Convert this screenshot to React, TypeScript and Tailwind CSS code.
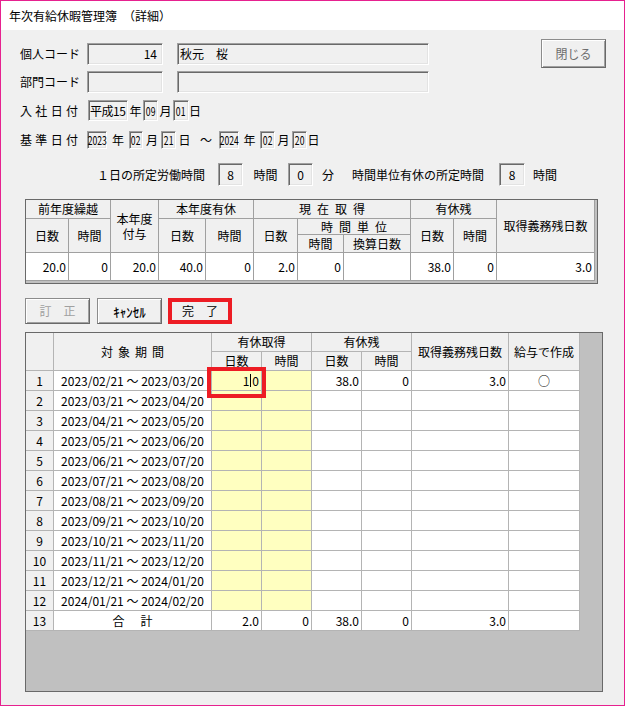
import React from 'react';

const sunken =
  'box-border flex items-center bg-[#f0f0f0] border border-t-[#a0a0a0] border-l-[#a0a0a0] border-r-white border-b-white shadow-[inset_1px_1px_0_#696969,inset_-1px_-1px_0_#e3e3e3]';

const raised =
  'box-border flex items-center justify-center bg-[#f0f0f0] border border-t-[#8c8c8c] border-l-[#8c8c8c] border-r-[#696969] border-b-[#696969] shadow-[inset_1px_1px_0_#ffffff,inset_-1px_-1px_0_#a0a0a0]';

const periods: [string, string][] = [
  ['2023/02/21', '2023/03/20'],
  ['2023/03/21', '2023/04/20'],
  ['2023/04/21', '2023/05/20'],
  ['2023/05/21', '2023/06/20'],
  ['2023/06/21', '2023/07/20'],
  ['2023/07/21', '2023/08/20'],
  ['2023/08/21', '2023/09/20'],
  ['2023/09/21', '2023/10/20'],
  ['2023/10/21', '2023/11/20'],
  ['2023/11/21', '2023/12/20'],
  ['2023/12/21', '2024/01/20'],
  ['2024/01/21', '2024/02/20'],
];

const Spaced: React.FC<{ text: string; className?: string }> = ({ text, className = '' }) => (
  <span className={`flex justify-between ${className}`}>
    {text.split('').map((c, i) => (
      <span key={i}>{c}</span>
    ))}
  </span>
);

// narrow digits inside the small date boxes
const Narrow: React.FC<{ children: React.ReactNode }> = ({ children }) => (
  <span className="inline-block whitespace-nowrap scale-x-[0.72]">{children}</span>
);

const H: React.FC<{ className?: string; children?: React.ReactNode }> = ({ className = '', children }) => (
  <div className={`bg-[#f0f0f0] flex items-center justify-center ${className}`}>{children}</div>
);

const D: React.FC<{ className?: string; children?: React.ReactNode }> = ({ className = 'bg-white', children }) => (
  <div className={`flex items-center justify-end pr-[2px] ${className}`}>{children}</div>
);

const App: React.FC = () => {
  return (
    <div className="w-[625px] h-[706px] box-border border border-[#e6218f] bg-[#f0f0f0] flex flex-col overflow-hidden text-[12px] leading-none text-black font-['Noto_Sans_CJK_JP',sans-serif]">
      {/* TITLE */}
      <div className="h-[29px] shrink-0 bg-white flex items-center pl-[8px]">年次有給休暇管理簿　（詳細）</div>

      {/* 個人コード / 部門コード */}
      <div className="flex pl-[19px] pr-[18px] pt-[9px]">
        <div className="flex flex-col gap-[6px] pt-[4px]">
          <div className="flex items-center h-[22px]">
            <span className="w-[67px]">個人コード</span>
            <div className={`${sunken} w-[76px] h-[22px] justify-end pr-[5px]`}>14</div>
            <div className={`${sunken} w-[252px] h-[22px] ml-[14px] pl-[2px]`}>秋元　桜</div>
          </div>
          <div className="flex items-center h-[22px]">
            <span className="w-[67px]">部門コード</span>
            <div className={`${sunken} w-[76px] h-[22px]`} />
            <div className={`${sunken} w-[252px] h-[22px] ml-[14px]`} />
          </div>
        </div>
        <button className={`${raised} ml-auto w-[65px] h-[29px] text-[#6d6d6d]`}>閉じる</button>
      </div>

      {/* 入社日付 */}
      <div className="flex items-center h-[21px] mt-[7px] pl-[19px]">
        <span className="w-[68px]">
          <Spaced text="入社日付" className="w-[58px]" />
        </span>
        <div className={`${sunken} w-[40px] h-[21px] pl-[1px] whitespace-nowrap tracking-[-0.5px]`}>平成15</div>
        <span className="w-[15px] text-center">年</span>
        <div className={`${sunken} w-[15px] h-[21px] justify-center`}>
          <Narrow>09</Narrow>
        </div>
        <span className="w-[15px] text-center">月</span>
        <div className={`${sunken} w-[16px] h-[21px] justify-center`}>
          <Narrow>01</Narrow>
        </div>
        <span className="w-[12px] text-center">日</span>
      </div>

      {/* 基準日付 */}
      <div className="flex items-center h-[18px] mt-[10px] pl-[19px]">
        <span className="w-[67px]">
          <Spaced text="基準日付" className="w-[58px]" />
        </span>
        <div className={`${sunken} w-[20px] h-[18px] justify-center`}>
          <Narrow>2023</Narrow>
        </div>
        <span className="w-[22px] text-center">年</span>
        <div className={`${sunken} w-[14px] h-[18px] justify-center`}>
          <Narrow>02</Narrow>
        </div>
        <span className="w-[18px] text-center">月</span>
        <div className={`${sunken} w-[15px] h-[18px] justify-center`}>
          <Narrow>21</Narrow>
        </div>
        <span className="w-[17px] text-center">日</span>
        <span className="w-[26px] text-center">～</span>
        <div className={`${sunken} w-[20px] h-[18px] justify-center`}>
          <Narrow>2024</Narrow>
        </div>
        <span className="w-[21px] text-center">年</span>
        <div className={`${sunken} w-[15px] h-[18px] justify-center`}>
          <Narrow>02</Narrow>
        </div>
        <span className="w-[17px] text-center">月</span>
        <div className={`${sunken} w-[15px] h-[18px] justify-center`}>
          <Narrow>20</Narrow>
        </div>
        <span className="w-[13px] text-center">日</span>
      </div>

      {/* 所定労働時間 */}
      <div className="flex items-center h-[23px] mt-[14px] pl-[96px]">
        <span className="w-[121px]">１日の所定労働時間</span>
        <div className={`${sunken} w-[25px] h-[23px] justify-center`}>8</div>
        <span className="w-[45px] text-center">時間</span>
        <div className={`${sunken} w-[25px] h-[23px] justify-center`}>0</div>
        <span className="ml-[9px] w-[30px]">分</span>
        <span className="w-[147px]">時間単位有休の所定時間</span>
        <div className={`${sunken} w-[26px] h-[23px] justify-center`}>8</div>
        <span className="ml-[8px]">時間</span>
      </div>

      {/* SUMMARY TABLE */}
      <div className="ml-[24px] mt-[13px] w-[573px] h-[85px] shrink-0 box-border border border-[#696969] bg-[#c0c0c0]">
        <div className="grid w-fit grid-cols-[42px_41px_47px_46px_47px_43px_45px_66px_42px_42px_97px] grid-rows-[18px_15px_17px_27px] gap-px bg-[#a0a0a0] pr-px pb-px">
          <H className="col-span-2">前年度繰越</H>
          <H className="row-span-3 flex-col gap-[3px]">
            <span>本年度</span>
            <span>付与</span>
          </H>
          <H className="col-span-2">本年度有休</H>
          <H className="col-span-3">
            <Spaced text="現在取得" className="w-[66px]" />
          </H>
          <H className="col-span-2">有休残</H>
          <H className="row-span-3">取得義務残日数</H>

          <H className="row-span-2">日数</H>
          <H className="row-span-2">時間</H>
          <H className="row-span-2">日数</H>
          <H className="row-span-2">時間</H>
          <H className="row-span-2">日数</H>
          <H className="col-span-2">
            <Spaced text="時間単位" className="w-[66px]" />
          </H>
          <H className="row-span-2">日数</H>
          <H className="row-span-2">時間</H>

          <H>時間</H>
          <H>換算日数</H>

          <D>20.0</D>
          <D>0</D>
          <D>20.0</D>
          <D>40.0</D>
          <D>0</D>
          <D>2.0</D>
          <D>0</D>
          <D />
          <D>38.0</D>
          <D>0</D>
          <D>3.0</D>
        </div>
      </div>

      {/* BUTTONS */}
      <div className="flex items-center mt-[14px] ml-[24px] h-[26px]">
        <button className={`${raised} w-[65px] h-[26px] text-[#a0a0a0]`}>訂　正</button>
        <button className={`${raised} w-[65px] h-[26px] ml-[7px] text-[13px] font-medium`}>ｷｬﾝｾﾙ</button>
        <div className="box-border flex items-center justify-center w-[64px] h-[26px] ml-[6px] border-[4px] border-[#ed1c24]">完　了</div>
      </div>

      {/* DETAIL TABLE */}
      <div className="relative ml-[24px] mt-[8px] w-[578px] h-[360px] shrink-0 box-border border border-[#696969] bg-[#c0c0c0]">
        <div className="grid w-fit grid-cols-[27px_157px_49px_49px_49px_49px_96px_70px] grid-rows-[18px_18px_repeat(13,19px)] gap-px bg-[#b4b4b4] pr-px pb-px">
          <H className="row-span-2" />
          <H className="row-span-2">
            <Spaced text="対象期間" className="w-[63px]" />
          </H>
          <H className="col-span-2">有休取得</H>
          <H className="col-span-2">有休残</H>
          <H className="row-span-2">取得義務残日数</H>
          <H className="row-span-2">給与で作成</H>
          <H>日数</H>
          <H>時間</H>
          <H>日数</H>
          <H>時間</H>

          {periods.map(([from, to], i) => (
            <React.Fragment key={from}>
              <H>{i + 1}</H>
              <div className="bg-white flex items-center justify-center">
                {from} ～ {to}
              </div>
              {i === 0 ? (
                <D className="bg-[#ffffc0]">
                  1<span className="inline-block w-px h-[13px] bg-black mx-[1px]" />0
                </D>
              ) : (
                <D className="bg-[#ffffc0]" />
              )}
              <D className="bg-[#ffffc0]" />
              <D>{i === 0 ? '38.0' : ''}</D>
              <D>{i === 0 ? '0' : ''}</D>
              <D>{i === 0 ? '3.0' : ''}</D>
              <div className="bg-white flex items-center justify-center">{i === 0 ? '○' : ''}</div>
            </React.Fragment>
          ))}

          <H>13</H>
          <div className="bg-white flex items-center justify-center">
            <span>合</span>
            <span className="ml-[16px]">計</span>
          </div>
          <D>2.0</D>
          <D>0</D>
          <D>38.0</D>
          <D>0</D>
          <D>3.0</D>
          <div className="bg-white" />
        </div>

        {/* highlight on the edited cell */}
        <div className="absolute left-[181px] top-[34px] w-[59px] h-[31px] box-border border-[4px] border-[#ed1c24]" />
      </div>
    </div>
  );
};

export default App;
